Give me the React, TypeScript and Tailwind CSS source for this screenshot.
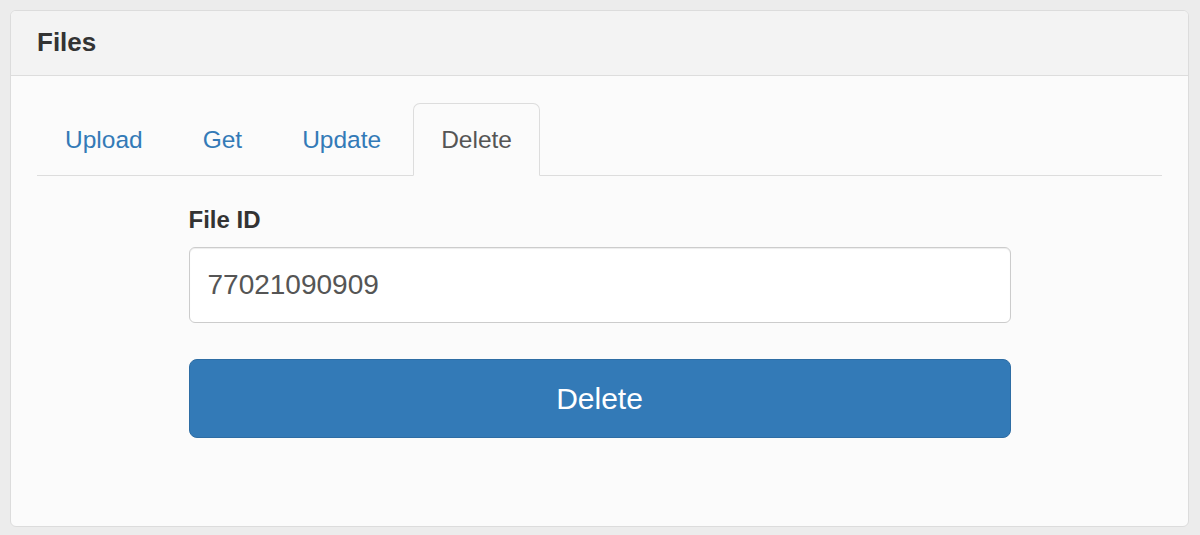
import React from "react";

// ---------------------------------------------------------------------------
// Tabs
// ---------------------------------------------------------------------------

const TABS = ["Upload", "Get", "Update", "Delete"];

function Tabs({ active }: { active: string }) {
  return (
    <ul className="flex border-b border-[#dddddd]">
      {TABS.map((tab) => {
        const isActive = tab === active;
        return (
          <li key={tab} className="mr-[4px] -mb-px">
            <a
              href="#"
              className={[
                "flex h-[73px] items-center px-[27px] pt-[2px] text-[24.5px] rounded-t-[7px] border",
                isActive
                  ? "border-[#dddddd] border-b-transparent bg-[#fbfbfb] text-[#555555]"
                  : "border-transparent text-[#337ab7]",
              ].join(" ")}
            >
              {tab}
            </a>
          </li>
        );
      })}
    </ul>
  );
}

// ---------------------------------------------------------------------------
// App
// ---------------------------------------------------------------------------

export default function App() {
  return (
    <div
      className="min-h-[535px] w-[1200px] bg-[#ececec] pt-[10px] pl-[10px] pr-[11px]"
      style={{ fontFamily: '"Liberation Sans", Arial, sans-serif' }}
    >
      <div className="h-[517px] overflow-hidden rounded-[6px] border border-[#dcdcdc] bg-[#fbfbfb]">
        {/* Heading */}
        <div className="flex h-[65px] items-center border-b border-[#dddddd] bg-[#f3f3f3] px-[26px] pb-[2px]">
          <h3 className="text-[26px] font-bold text-[#333333]">Files</h3>
        </div>

        {/* Body */}
        <div className="px-[26px] pt-[27px]">
          <Tabs active="Delete" />

          <form className="mx-auto mt-[27px] flex w-[822px] flex-col">
            <label className="mb-[10px] text-[24px] font-bold leading-[34px] text-[#333333]">
              File ID
            </label>
            <input
              type="text"
              defaultValue="77021090909"
              className="h-[76px] rounded-[6px] border border-[#cccccc] bg-white px-[18px] text-[28px] text-[#555555] shadow-[inset_0_1px_1px_rgba(0,0,0,0.075)] outline-none"
            />
            <button
              type="button"
              className="mt-[36px] h-[79px] rounded-[8px] border border-[#2e6da4] bg-[#337ab7] text-[30px] text-white"
            >
              Delete
            </button>
          </form>
        </div>
      </div>
    </div>
  );
}
